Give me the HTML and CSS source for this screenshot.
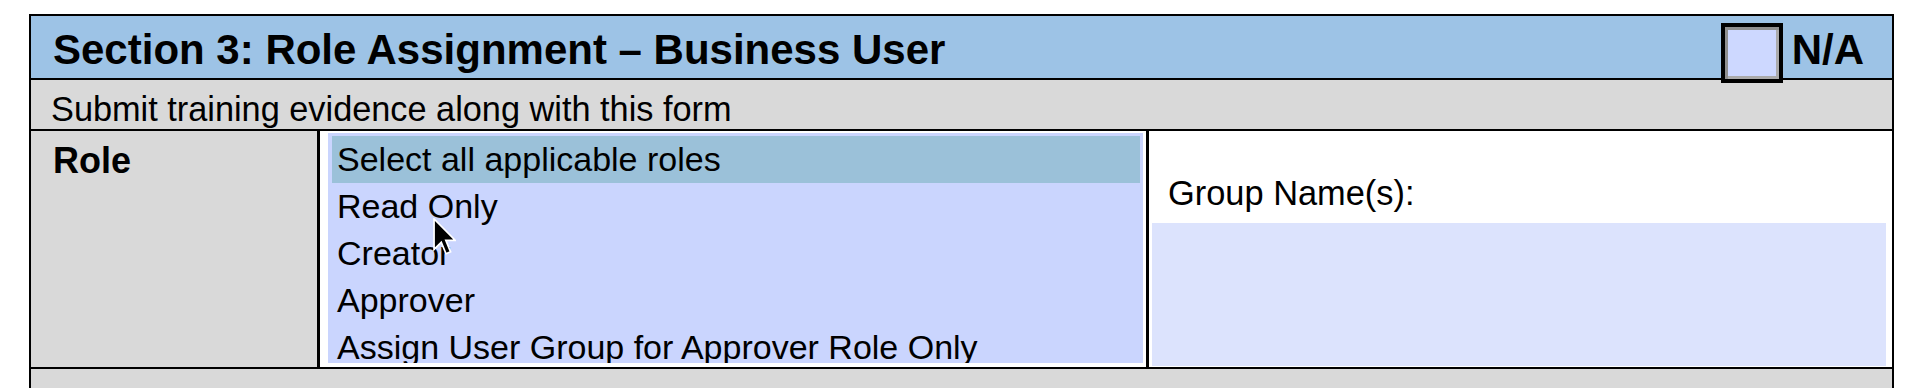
FILE: index.html
```html
<!DOCTYPE html>
<html lang="en">
<head>
  <meta charset="UTF-8" />
  <title>Role Assignment</title>
  <link rel="stylesheet" href="styles.css">
</head>
<body>

  <!-- SECTION 3 -->
  <div class="form-section">
    <div class="section-head">
      <h2 class="section-title">Section 3: Role Assignment – Business User</h2>
      <span class="na-box"></span>
      <span class="na-text">N/A</span>
    </div>

    <div class="section-note">Submit training evidence along with this form</div>

    <div class="role-row">
      <div class="role-label">Role</div>

      <div class="role-cell">
        <ul class="role-list">
          <li class="selected">Select all applicable roles</li>
          <li>Read Only</li>
          <li>Creator</li>
          <li>Approver</li>
          <li>Assign User Group for Approver Role Only</li>
        </ul>
      </div>

      <div class="group-cell">
        <div class="group-label">Group Name(s):</div>
        <div class="group-field"></div>
      </div>
    </div>

    <div class="next-row"></div>
  </div>

  <!-- mouse pointer over the list -->
  <svg class="cursor" width="23" height="38" viewBox="0 0 12 20">
    <path d="M0.5 0.5 L0.5 16.5 L4.3 12.8 L6.8 18.8 L9.2 17.8 L6.7 11.8 L11.7 11.8 Z" fill="#000" stroke="#fff" stroke-width="0.9" stroke-linejoin="miter"/>
  </svg>

</body>
</html>
```

FILE: styles.css
```css
* {
  margin: 0;
  padding: 0;
  box-sizing: border-box;
}

body {
  font-family: 'Liberation Sans', Arial, sans-serif;
  background-color: #fff;
  color: #000;
  overflow: hidden;
}

.form-section {
  margin: 14px 0 0 29px;
  width: 1865px;
  border: 2px solid #000;
  border-bottom: none;
}

/* header */
.section-head {
  display: flex;
  align-items: center;
  height: 64px;
  padding: 0 28px 0 22px;
  background-color: #9dc3e6;
  border-bottom: 2px solid #000;
}

.section-title {
  font-size: 42px;
  font-weight: bold;
  padding-top: 5px;
}

.na-box {
  position: relative;
  z-index: 1;
  align-self: flex-start;
  margin-top: 7px;
  margin-left: auto;
  width: 62px;
  height: 60px;
  border: 4px solid #000;
  background-color: #cdd8ff;
  box-shadow: inset 3px 3px 0 #8f8f8f, inset -3px -3px 0 #ababab;
}

.na-text {
  margin-left: 9px;
  font-size: 42px;
  font-weight: bold;
  padding-top: 5px;
}

/* note row */
.section-note {
  height: 51px;
  padding: 10px 20px 0;
  font-size: 34.3px;
  background-color: #d9d9d9;
  border-bottom: 2px solid #000;
}

/* role row */
.role-row {
  display: grid;
  grid-template-columns: 289px 829px 743px;
  grid-template-rows: minmax(0, 1fr);
  height: 238px;
  border-bottom: 2px solid #000;
}

.role-label {
  background-color: #d9d9d9;
  border-right: 3px solid #000;
  padding: 9px 0 0 22px;
  font-size: 36px;
  font-weight: bold;
}

.role-cell {
  min-height: 0;
  background-color: #fff;
  border-right: 3px solid #000;
  padding: 2px 3px 4px 8px;
}

.role-list {
  list-style: none;
  height: 100%;
  overflow: hidden;
  padding: 3px 3px 0 4px;
  background-color: #cad5fe;
}

.role-list li {
  height: 47px;
  line-height: 47px;
  padding-left: 5px;
  font-size: 34px;
  white-space: nowrap;
}

.role-list li.selected {
  background-color: #9bc1d9;
}

.group-cell {
  display: flex;
  flex-direction: column;
  min-height: 0;
  background-color: #fff;
  padding: 43px 6px 1px 3px;
}

.group-label {
  font-size: 34.4px;
  line-height: 39px;
  padding-left: 16px;
}

.group-field {
  flex: 1;
  margin-top: 10px;
  background-color: #dce3fd;
}

.next-row {
  height: 19px;
  background-color: #d9d9d9;
}

.cursor {
  position: absolute;
  left: 433px;
  top: 218px;
}
```
